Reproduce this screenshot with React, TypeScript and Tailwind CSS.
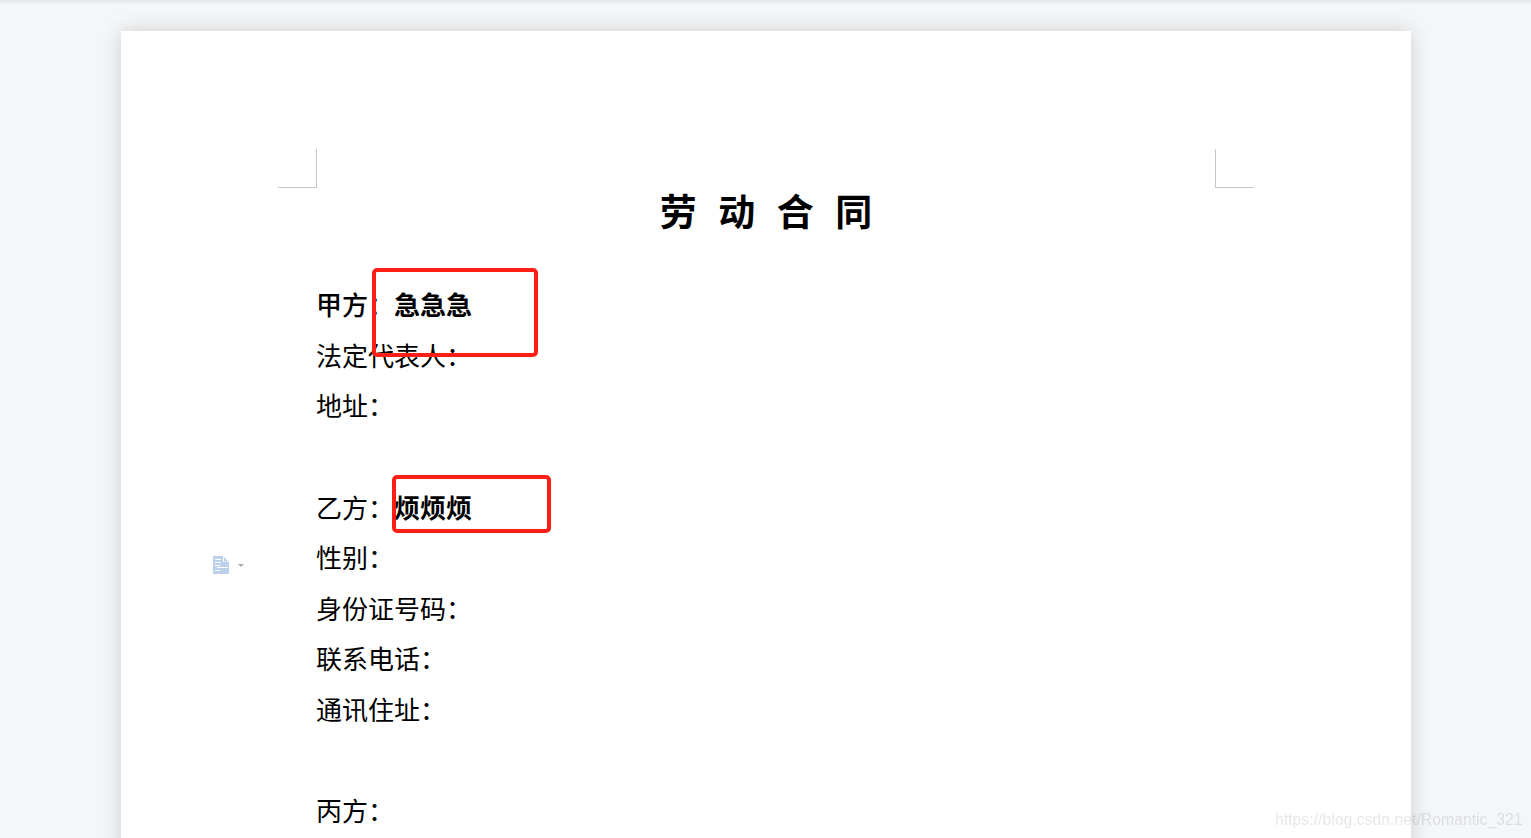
const PARTIES = [
  [
    { label: "甲方\uFF1A", value: "急急急", strong: true },
    { label: "法定代表人\uFF1A" },
    { label: "地址\uFF1A" },
  ],
  [
    { label: "乙方\uFF1A", value: "烦烦烦" },
    { label: "性别\uFF1A" },
    { label: "身份证号码\uFF1A" },
    { label: "联系电话\uFF1A" },
    { label: "通讯住址\uFF1A" },
  ],
  [{ label: "丙方\uFF1A" }],
];

function PasteIcon() {
  return (
    <svg width="34" height="18" viewBox="0 0 34 18">
      <path d="M0 0h10v6h6v12H0z" fill="#bcd0ec" />
      <path d="M11 1l4.5 4.5H11z" fill="#bcd0ec" />
      <path d="M2 3.5h6M2 6.5h6M2 9.5h5M4 11.5h11M2 14.5h5" stroke="#fff" strokeWidth="1" />
      <path d="M25 8h6l-3 3z" fill="#a9a9a9" />
    </svg>
  );
}

function Line({ label, value, strong }: { label: string; value?: string; strong?: boolean }) {
  return (
    <div className="flex h-[50.6px] items-center text-[26px] text-black">
      <span className={strong ? "font-medium" : ""}>{label}</span>
      {value && <span className="font-semibold">{value}</span>}
    </div>
  );
}

export default function App() {
  return (
    <div className="relative h-[838px] overflow-hidden bg-[#f5f6f8] font-['Noto_Sans_CJK_SC','Liberation_Sans',sans-serif]">
      <div className="h-[4px] bg-gradient-to-b from-[#e4e5e8] to-[#f5f6f8]" />
      <div className="mr-[120px] ml-[121px] mt-[27px] h-[900px] bg-white pt-[118px] shadow-[0_0_20px_rgba(0,0,0,0.16)]">
        {/* crop marks */}
        <div className="flex h-[39px] justify-between px-[157px]">
          <div className="w-[39px] border-r border-b border-[#c6c6c6]" />
          <div className="w-[39px] border-b border-l border-[#c6c6c6]" />
        </div>

        <h1 className="-mt-[1px] mb-[43.5px] flex h-[48px] items-center justify-center gap-[21.5px] text-[37px] font-bold text-black">
          <span>劳</span>
          <span>动</span>
          <span>合</span>
          <span>同</span>
        </h1>

        <div className="flex flex-col gap-[50.6px] pl-[195px]">
          {PARTIES.map((group, i) => (
            <div key={i}>
              {group.map((line) => (
                <Line key={line.label} {...line} />
              ))}
            </div>
          ))}
        </div>
      </div>

      {/* annotations on top of the page */}
      <div className="absolute top-[268px] left-[372px] h-[89px] w-[166px] rounded-[5px] border-[4px] border-[#fb1f16]" />
      <div className="absolute top-[475px] left-[392px] h-[58px] w-[159px] rounded-[5px] border-[4px] border-[#fb1f16]" />
      <div className="absolute top-[556px] left-[213px] flex">
        <PasteIcon />
      </div>
      <div className="absolute top-[808px] left-[1275px] font-['Liberation_Sans',sans-serif] text-[15.8px] text-black/10 blur-[0.4px]">
        https://blog.csdn.net/Romantic_321
      </div>
    </div>
  );
}
